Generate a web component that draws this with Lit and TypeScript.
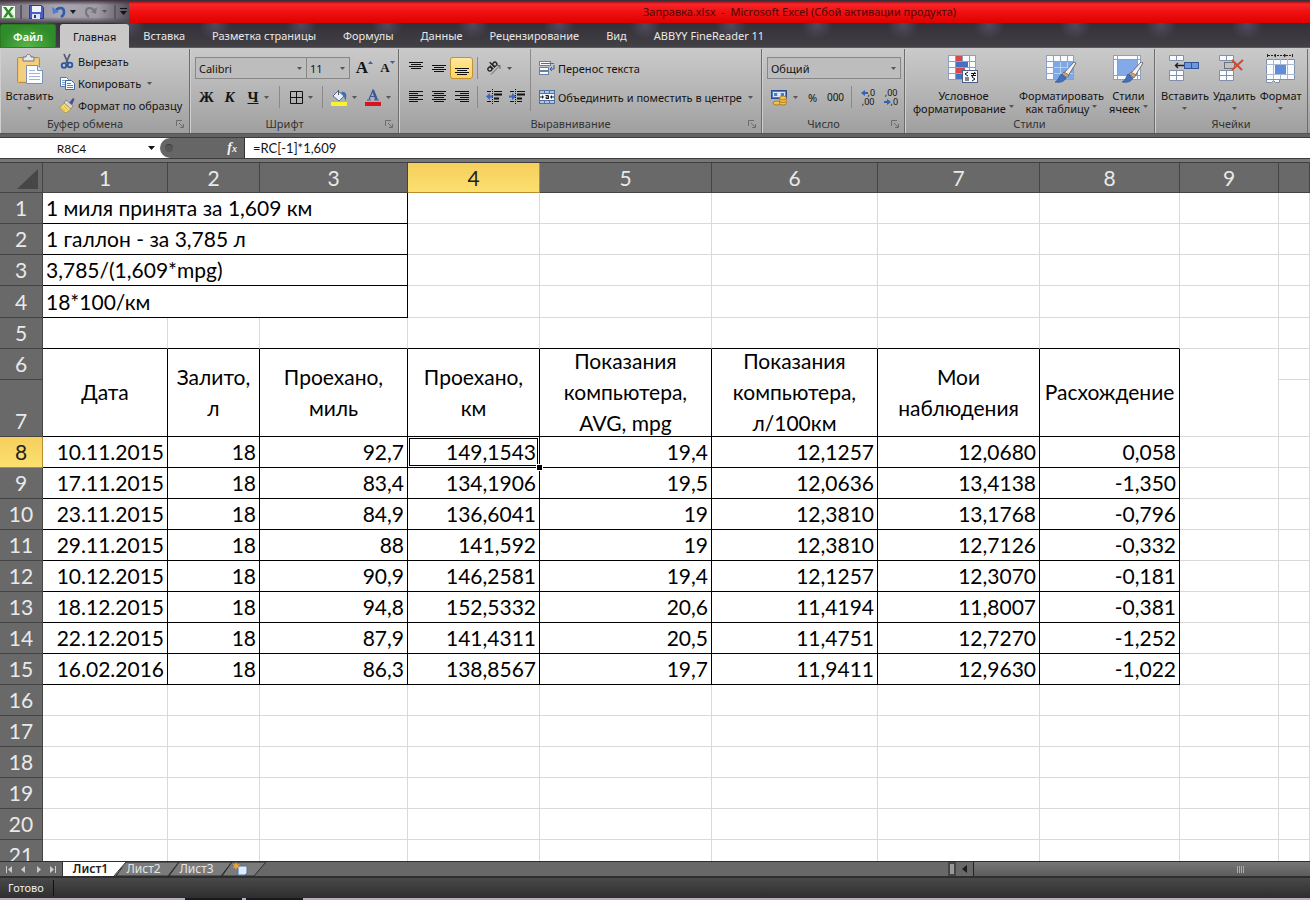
import { LitElement, html, svg, css, nothing } from "lit";
import { customElement, state } from "lit/decorators.js";
import { classMap } from "lit/directives/class-map.js";

const icon = (w: number, h: number, body: unknown) =>
  html`<svg width=${w} height=${h} viewBox="0 0 ${w} ${h}" aria-hidden="true">${body}</svg>`;

const caret = icon(5, 3, svg`<path d="M0 0h5L2.500 3z" fill="#555"/>`);

/* Horizontal strokes of the alignment buttons: [x, y, width] */
const strokes = (rows: number[][]) =>
  icon(16, 16, svg`${rows.map(([x, y, w]) => svg`<rect x=${x} y=${y} width=${w} height="1" fill="#111"/>`)}`);

const alignTop = strokes([[1, 2, 14], [3, 4, 10], [1, 6, 14], [3, 8, 10]]);
const alignMiddle = strokes([[1, 5, 14], [3, 7, 10], [1, 9, 14], [3, 11, 10]]);
const alignBottom = strokes([[1, 8, 14], [3, 10, 10], [1, 12, 14], [3, 14, 10]]);
const alignLeft = strokes([[1, 2, 14], [1, 4, 9], [1, 6, 14], [1, 8, 9], [1, 10, 14], [1, 12, 9]]);
const alignCenter = strokes([[1, 2, 14], [3, 4, 10], [1, 6, 14], [3, 8, 10], [1, 10, 14], [3, 12, 10]]);
const alignRight = strokes([[1, 2, 14], [6, 4, 9], [1, 6, 14], [6, 8, 9], [1, 10, 14], [6, 12, 9]]);

const indent = (out: boolean) =>
  icon(16, 16, svg`
    <path d="M1 2.500h4M8 2.500h8M1 12.500h4M8 12.500h5" stroke="#111"/>
    <path d="M8 5.500h8M8 9.500h5" stroke="#111" stroke-width="2"/>
    <path d="M6.500 0v16" stroke="#111" stroke-dasharray="1 1"/>
    <path d=${out ? "M0 7.500l4-3.500v2.500h3v2h-3v2.500z" : "M7 7.500L3 4v2.500H0v2h3v2.500z"} fill="#3a66c4"/>`);

const excel = icon(16, 16, svg`
  <rect x=".5" y="1.500" width="14" height="13" fill="#f3faf1" stroke="#5c9a55"/>
  <path d="M2 3h3l2.500 3.500L10 3h3L9 8l4 5.500h-3.500L7.200 10 5 13.500H2L5.700 8z" fill="#2e8b2b"/>
  <path d="M10 8l3 4" stroke="#bfe3ad"/>`);
const save = icon(15, 15, svg`
  <path d="M.5 1.500h12l2 2v11h-14z" fill="#4a5fc0" stroke="#2c3b85"/>
  <rect x="3" y="2" width="9" height="6" fill="#eef2fb"/>
  <rect x="3" y="10" width="8" height="5" fill="#dfe4f2"/><rect x="5" y="11" width="2" height="3" fill="#2c3b85"/>`);
const undo = icon(14, 14, svg`
  <path d="M4 5c3-3 8-3 8 2 0 2-1 4-3 5" fill="none" stroke="#2d5cae" stroke-width="2.500"/>
  <path d="M0 2l1 7 6-2z" fill="#4a7fd0"/>`);
const redo = icon(14, 14, svg`
  <path d="M10 5c-3-3-8-3-8 2 0 2 1 4 3 5" fill="none" stroke="#77757d" stroke-width="2"/>
  <path d="M13 2l-1 7-5-2z" fill="#77757d"/>`);

const paste = icon(28, 30, svg`
  <rect x="1.500" y="3.500" width="22" height="25" rx="1" fill="#f0c368" stroke="#c08c36"/>
  <rect x="3" y="5" width="19" height="22" fill="#f5cf80"/>
  <path d="M7 3h3c0-3.500 5-3.500 5 0h3v4H7z" fill="#e8e8e8" stroke="#777"/>
  <path d="M10.500 11.500h11l5 5v13h-16z" fill="#fcfdff" stroke="#7d8fb5"/>
  <path d="M21.500 11.500v5h5" fill="#dde6f5" stroke="#7d8fb5"/>
  <path d="M13 16.500h6M13 19.500h11M13 22.500h11M13 25.500h11" stroke="#a3b4d4"/>`);
const cut = icon(16, 16, svg`
  <path d="M5 1l4 9M11 1L7 10" stroke="#555e70" stroke-width="1.800"/>
  <circle cx="5" cy="12.500" r="2.300" fill="none" stroke="#2a56a8" stroke-width="1.800"/>
  <circle cx="11" cy="12" r="2.300" fill="none" stroke="#2a56a8" stroke-width="1.800"/>`);
const copy = icon(16, 16, svg`
  <path d="M1.500 2.500h6l2 2v7h-8z" fill="#f7faff" stroke="#5577ad"/>
  <path d="M3 5.500h4M3 7.500h5M3 9.500h4" stroke="#7f9ccb"/>
  <path d="M6.500 5.500h6l3 3v6h-9z" fill="#f7faff" stroke="#3f66a8"/>
  <path d="M8 8.500h4M8 10.500h6M8 12.500h6" stroke="#5f83bd"/>`);
const brush = icon(16, 16, svg`
  <path d="M10 6l4-5 1.500 1L13 8z" fill="#55498a"/>
  <path d="M7 3l7 6-2 3-7-6z" fill="#d4d7de" stroke="#666" stroke-width=".6"/>
  <path d="M5 6l7 6c-3 2-4 4-6 3.500C4 14 2 11 0 10.500 2 10 4 8 5 6z" fill="#f5dc6e" stroke="#a98420" stroke-width=".6"/>
  <path d="M3 10.500l3 3M5 9l3.500 3.500" stroke="#c59b2a" stroke-width=".7"/>`);

const borders = icon(13, 13, svg`<path d="M.5 .5h12v12H.5zM6.500 .5v12M.5 6.500h12" fill="none" stroke="#111"/>`);
const fill = icon(16, 17, svg`
  <path d="M2 7l5-5 6 5-5 5z" fill="#e9f0fa" stroke="#4d6c9c"/>
  <path d="M7.500 6V1" stroke="#555"/><path d="M10 3c6-1 6 4 4.500 9-1-2-1-5-2.500-6z" fill="#3d6bb5"/>
  <rect y="13" width="16" height="4" fill="#f8f32b"/>`);
const fontColor = icon(16, 17, svg`
  <path d="M4 10.500L8 1l4 9.500" fill="none" stroke="#3a5a9c" stroke-width="1.200"/>
  <path d="M8 1.500l3.500 9" stroke="#3a5a9c" stroke-width="2.500"/>
  <path d="M5.500 7.500h5M2 11h4M9 11h5" stroke="#3a5a9c"/>
  <rect y="13" width="16" height="4" fill="#d8141a"/>`);
const markUp = icon(5, 3, svg`<path d="M0 3L2.500 0 5 3z" fill="#3c5fae"/>`);
const markDown = icon(5, 3, svg`<path d="M0 0h5L2.500 3z" fill="#3c5fae"/>`);

const slant = icon(16, 16, svg`
  <g transform="rotate(-45 6 7)" fill="none" stroke="#222" stroke-width="1.300">
    <circle cx="3" cy="7" r="2"/><path d="M5.500 4.500V9.500"/>
    <circle cx="10" cy="7" r="2"/><path d="M7.700 2v7.500"/>
  </g>
  <path d="M5 14.500l9-9M10.500 5.500H14V9" fill="none" stroke="#666"/>`);
const wrap = icon(16, 16, svg`
  <rect x=".5" y="1.500" width="11" height="4" fill="#fafcff" stroke="#6b7f9f"/>
  <path d="M2 3.500h13" stroke="#8d5a44"/>
  <rect x=".5" y="7.500" width="9" height="3" fill="#fafcff" stroke="#6b7f9f"/>
  <rect x=".5" y="11.500" width="9" height="3" fill="#fafcff" stroke="#6b7f9f"/>
  <path d="M15 5v4h-4M13 7l-2 2 2 2" fill="none" stroke="#2e5cb0"/>`);
const merge = icon(16, 16, svg`
  <rect x=".5" y="1.500" width="15" height="13" fill="#f4f8ff" stroke="#52719f"/>
  <path d="M1 2h14v2H1zM1 12h14v2H1z" fill="#a9c6ef"/>
  <path d="M5.500 1v3M10.500 1v3M5.500 12v3M10.500 12v3M0 4.500h16M0 11.500h16" stroke="#52719f"/>
  <path d="M1 8h4M11 8h4M3.500 6.500V9.500M12.500 6.500V9.500" fill="none" stroke="#222"/>
  <path d="M6.500 6.500h3v3.500M9 8H7v1.500h2" fill="none" stroke="#222"/>`);
const money = icon(17, 17, svg`
  <rect x=".5" y="1.500" width="15" height="8" fill="#4d7cc7" stroke="#294d90"/>
  <rect x="2.500" y="3.500" width="11" height="4" fill="none" stroke="#dbe8fb"/><circle cx="8" cy="5.500" r="2" fill="#dbe8fb"/>
  <g fill="#f3c24a" stroke="#93651a" stroke-width=".7">
    <ellipse cx="6" cy="14" rx="4" ry="2"/><ellipse cx="12" cy="14" rx="3.500" ry="2"/><ellipse cx="12" cy="11.500" rx="3.500" ry="2"/><ellipse cx="12" cy="9" rx="3.500" ry="2"/>
  </g>`);
const arrowL = icon(7, 6, svg`<path d="M0 3l4-3v2h3v2H4v2z" fill="#2f61bd"/>`);
const arrowR = icon(7, 6, svg`<path d="M7 3L3 0v2H0v2h3v2z" fill="#2f61bd"/>`);

const gridBase = svg`
  <rect x=".5" y="1.500" width="27" height="24" fill="#f9fbff" stroke="#8ea0be"/>
  <path d="M7.500 1v25M14.500 1v25M21.500 1v25M0 7.500h28M0 13.500h28M0 19.500h28" stroke="#8ea0be"/>`;
const paintBrush = svg`
  <path d="M28 8l2 1-8 13-4-3z" fill="#f2f2f2" stroke="#555" stroke-width=".8"/>
  <path d="M18 18l5 3-2 3-5-4z" fill="#c9a27c" stroke="#705038" stroke-width=".6"/>
  <path d="M15 20l5 4c-2 4-6 5-11 4 3-1 4-5 6-8z" fill="#3f73bf" stroke="#274a86" stroke-width=".6"/>`;
const conditional = icon(31, 30, svg`${gridBase}
  <rect x="8" y="2" width="6" height="5" fill="#d84848"/><rect x="8" y="8" width="12" height="5" fill="#4572c0"/>
  <rect x="8" y="14" width="9" height="5" fill="#d84848"/><rect x="8" y="20" width="6" height="5" fill="#4572c0"/>
  <rect x="14.500" y="16.500" width="15" height="12" fill="#f7faff" stroke="#4c5f86"/>
  <path d="M20 18l-3 2 3 2M17 24h4M17 26h4M23 19.500h5M23 21.500h5M27 18l-3 5M24 23l3 2-3 2" fill="none" stroke="#111"/>`);
const formatTable = icon(31, 30, svg`${gridBase}
  <path d="M8 8h19v17H8z" fill="#7fa8e6"/><path d="M14.500 8v17M21.500 8v17M8 13.500h19M8 19.500h19" stroke="#b8cff2"/>${paintBrush}`);
const cellStyles = icon(31, 30, svg`
  <rect x=".5" y="1.500" width="27" height="24" fill="#f9fbff" stroke="#8ea0be"/>
  <path d="M4.500 1v25M24.500 1v25M0 5.500h28M0 21.500h28" stroke="#8ea0be"/>
  <rect x="5" y="6" width="19" height="15" fill="#82a9e8"/>${paintBrush}`);
const smallGrid = svg`<g fill="#f9fbff" stroke="#8190ab">
  <path d="M.5 1.500h14v5H.5zM7.500 1.500v5M.5 16.500h14v10H.5zM7.500 16.500v10M.5 21.500h14"/></g>`;
const insertCells = icon(31, 30, svg`${smallGrid}
  <path d="M6 11.500h9M9 9L6.500 11.500 9 14" fill="none" stroke="#222" stroke-width="1.400"/>
  <rect x="15.500" y="8.500" width="14" height="6" fill="#6c98df" stroke="#34558f"/><path d="M22.500 8v7" stroke="#34558f"/>`);
const deleteCells = icon(31, 30, svg`${smallGrid}
  <rect x="5.500" y="8.500" width="10" height="6" fill="none" stroke="#222" stroke-dasharray="1 1"/>
  <path d="M13 6l10 10M24 6L13 16" stroke="#d9452f" stroke-width="2"/>`);
const formatCells = icon(32, 30, svg`
  <path d="M3 1.500h24" stroke="#222" stroke-dasharray="2 1"/><path d="M2.500 0v3M27.500 0v3M11 0L9 1.500 11 3M19 0l2 1.500L19 3" stroke="#222" fill="none"/>
  <path d="M1.500 5.500h28v20h-28zM1.500 25.500v3h5l2-2 2 2h4v-3" fill="#f9fbff" stroke="#8190ab"/>
  <path d="M8.500 5v20M22.500 5v20M1 10.500h29M1 20.500h29M15.500 5v5M15.500 21v4" stroke="#aab8d0"/>
  <rect x="10" y="11" width="11" height="9" fill="#5f8ddc"/>`);
const launcher = icon(8, 8, svg`<path d="M.5 6V.5H6M4 7.500h3.500V4M3 3l4 4" fill="none" stroke="#6d6d6d"/>`);
const newSheet = icon(16, 14, svg`
  <path d="M5 4h9v7l-2 2H5z" fill="#dfeafb" stroke="#53719f"/>
  <path d="M3 0l1 2.500 3-.5-2 2 2 2-3-.500L3 8 2 5.500-.500 6l2-2-2-2 2.500.500z" fill="#f0a531"/>`);

interface Column { width: string; title: string }
const columns: Column[] = [
  { width: "c125", title: "Дата" },
  { width: "c92", title: "Залито,\nл" },
  { width: "c148", title: "Проехано,\nмиль" },
  { width: "c132", title: "Проехано,\nкм" },
  { width: "c172", title: "Показания\nкомпьютера,\nAVG, mpg" },
  { width: "c166", title: "Показания\nкомпьютера,\nл/100км" },
  { width: "c162", title: "Мои\nнаблюдения" },
  { width: "c140", title: "Расхождение" },
];
const notes = ["1 миля принята за 1,609 км", "1 галлон - за 3,785 л", "3,785/(1,609*mpg)", "18*100/км"];
const data = [
  ["10.11.2015", "18", "92,7", "149,1543", "19,4", "12,1257", "12,0680", "0,058"],
  ["17.11.2015", "18", "83,4", "134,1906", "19,5", "12,0636", "13,4138", "-1,350"],
  ["23.11.2015", "18", "84,9", "136,6041", "19", "12,3810", "13,1768", "-0,796"],
  ["29.11.2015", "18", "88", "141,592", "19", "12,3810", "12,7126", "-0,332"],
  ["10.12.2015", "18", "90,9", "146,2581", "19,4", "12,1257", "12,3070", "-0,181"],
  ["18.12.2015", "18", "94,8", "152,5332", "20,6", "11,4194", "11,8007", "-0,381"],
  ["22.12.2015", "18", "87,9", "141,4311", "20,5", "11,4751", "12,7270", "-1,252"],
  ["16.02.2016", "18", "86,3", "138,8567", "19,7", "11,9411", "12,9630", "-1,022"],
];

const reset = css`
  * { box-sizing: border-box; }
  svg { display: block; flex: none; }
  button, input, select { font: inherit; color: inherit; margin: 0; padding: 0; border: 0; background: none; border-radius: 0; outline: none; }
`;

@customElement("excel-ribbon")
export class ExcelRibbon extends LitElement {
  static styles = [reset, css`
    :host { display: flex; height: 86px; padding-top: 1px; color: #141414; background: linear-gradient(#cacaca, #b8b8b8 45%, #9f9f9f); border-bottom: 1px solid #555; overflow: hidden; }
    .group { display: flex; flex-direction: column; flex: none; border-right: 1px solid #6d6d6d; box-shadow: inset 1px 0 #cfcfcf; }
    .w190 { width: 190px; } .w209 { width: 209px; } .w363 { width: 363px; } .w143 { width: 143px; } .w250 { width: 250px; } .w153 { width: 153px; }
    .body { flex: 1; display: flex; min-height: 0; }
    .caption { display: flex; align-items: center; gap: 6px; height: 17px; padding-bottom: 2px; color: #333; }
    .caption span { flex: 1; text-align: center; }
    .caption svg { margin-right: 5px; }
    .big { display: flex; flex-direction: column; align-items: center; text-align: center; line-height: 13px; padding-top: 5px; white-space: nowrap; }
    .big svg:first-child { margin-bottom: 5px; }
    .big .tail { margin-top: 5px; }
    .big .line { display: flex; align-items: center; gap: 3px; }
    .clip { width: 59px; }
    .stack { display: flex; flex-direction: column; padding-top: 1px; }
    .stack button, .row button { display: flex; align-items: center; }
    .stack button { height: 22px; gap: 3px; white-space: nowrap; }
    .stack .drop { margin-left: 3px; }
    .rows { display: flex; flex-direction: column; padding: 6px 5px 0; gap: 3px; flex: 1; min-width: 0; }
    .rows.narrow { flex: none; padding-right: 2px; border-right: 1px solid #8b8b8b; margin: 0 0 5px; }
    .rows.narrow + .rows { padding-left: 8px; }
    .row { display: flex; align-items: center; height: 26px; white-space: nowrap; }
    .combo + .combo { margin-left: -1px; }
    .sep { width: 1px; height: 22px; margin: 0 4px; background: #8a8a8a; flex: none; }
    .combo { display: grid; align-items: center; height: 22px; border: 1px solid #878787; background: #bdbdbd; flex: none; }
    .combo select { grid-area: 1 / 1; appearance: none; width: 100%; height: 20px; padding-left: 3px; }
    .combo svg { grid-area: 1 / 1; justify-self: end; margin-right: 4px; pointer-events: none; }
    .w112 { width: 112px; } .w44 { width: 44px; } .w134 { width: 134px; }
    .tool { width: 23px; height: 22px; justify-content: center; flex: none; }
    .tool.wide { width: 34px; gap: 5px; }
    .row .on { background: linear-gradient(#ffe89a, #ffd45c); border: 1px solid #c29232; border-radius: 3px; }
    .serif { font-family: "Liberation Serif", serif; font-weight: 700; font-size: 15px; }
    .large { font-size: 17px; margin-left: 3px; }
    .small { font-size: 13px; }
    .grow svg { align-self: flex-start; margin-top: 4px; }
    .italic { font-style: italic; }
    .under { text-decoration: underline; }
    .text { gap: 3px; }
    .text .drop { margin-left: 3px; }
    .zeros { font-size: 10px; }
    .row .digits { display: grid; grid-template-columns: 7px 7px; grid-template-rows: 9px 9px; place-content: center; align-items: center; line-height: 9px; font-size: 9px; }
    .digits .full { grid-column: 1 / -1; text-align: right; }
    .styles { padding-left: 8px; gap: 5px; }
    .cells { padding-left: 6px; gap: 4px; }
  `];

  private big(img: unknown, lines: string[], cls = "") {
    return html`<button class="big ${cls}">${img}
      ${lines.length === 1
        ? html`<span>${lines[0]}</span><span class="tail">${caret}</span>`
        : html`<span>${lines[0]}</span><span class="line">${lines[1]} ${caret}</span>`}
    </button>`;
  }
  private caption(text: string, launch = true) {
    return html`<div class="caption"><span>${text}</span>${launch ? launcher : nothing}</div>`;
  }

  render() {
    return html`
      <section class="group w190">
        <div class="body">
          ${this.big(paste, ["Вставить"], "clip")}
          <div class="stack">
            <button>${cut}<span>Вырезать</span></button>
            <button>${copy}<span>Копировать</span><span class="drop">${caret}</span></button>
            <button>${brush}<span>Формат по образцу</span></button>
          </div>
        </div>
        ${this.caption("Буфер обмена")}
      </section>
      <section class="group w209">
        <div class="body"><div class="rows">
          <div class="row">
            <label class="combo w112"><select aria-label="Шрифт"><option>Calibri</option></select>${caret}</label>
            <label class="combo w44"><select aria-label="Размер шрифта"><option>11</option></select>${caret}</label>
            <button class="tool serif large grow" aria-label="Увеличить размер">A${markUp}</button>
            <button class="tool serif small grow" aria-label="Уменьшить размер">A${markDown}</button>
          </div>
          <div class="row">
            <button class="tool serif">Ж</button>
            <button class="tool serif italic">К</button>
            <button class="tool serif wide"><span class="under">Ч</span>${caret}</button>
            <span class="sep"></span>
            <button class="tool wide" aria-label="Границы">${borders}${caret}</button>
            <span class="sep"></span>
            <button class="tool wide" aria-label="Заливка">${fill}${caret}</button>
            <button class="tool wide" aria-label="Цвет текста">${fontColor}${caret}</button>
          </div>
        </div></div>
        ${this.caption("Шрифт")}
      </section>
      <section class="group w363">
        <div class="body">
          <div class="rows narrow">
            <div class="row">
              <button class="tool" aria-label="По верхнему краю">${alignTop}</button>
              <button class="tool" aria-label="По середине">${alignMiddle}</button>
              <button class="tool on" aria-label="По нижнему краю">${alignBottom}</button>
              <span class="sep"></span>
              <button class="tool wide" aria-label="Ориентация">${slant}${caret}</button>
            </div>
            <div class="row">
              <button class="tool" aria-label="По левому краю">${alignLeft}</button>
              <button class="tool" aria-label="По центру">${alignCenter}</button>
              <button class="tool" aria-label="По правому краю">${alignRight}</button>
              <span class="sep"></span>
              <button class="tool" aria-label="Уменьшить отступ">${indent(true)}</button>
              <button class="tool" aria-label="Увеличить отступ">${indent(false)}</button>
            </div>
          </div>
          <div class="rows">
            <div class="row"><button class="text">${wrap}<span>Перенос текста</span></button></div>
            <div class="row"><button class="text">${merge}<span>Объединить и поместить в центре</span><span class="drop">${caret}</span></button></div>
          </div>
        </div>
        ${this.caption("Выравнивание")}
      </section>
      <section class="group w143">
        <div class="body"><div class="rows">
          <div class="row"><label class="combo w134"><select aria-label="Числовой формат"><option>Общий</option></select>${caret}</label></div>
          <div class="row">
            <button class="tool wide" aria-label="Денежный формат">${money}${caret}</button>
            <button class="tool">%</button>
            <button class="tool zeros">000</button>
            <span class="sep"></span>
            <button class="tool digits" aria-label="Увеличить разрядность">${arrowL}<span>,0</span><span class="full">,00</span></button>
            <button class="tool digits" aria-label="Уменьшить разрядность"><span class="full">,00</span>${arrowR}<span>,0</span></button>
          </div>
        </div></div>
        ${this.caption("Число")}
      </section>
      <section class="group w250">
        <div class="body styles">
          ${this.big(conditional, ["Условное", "форматирование"])}
          ${this.big(formatTable, ["Форматировать", "как таблицу"])}
          ${this.big(cellStyles, ["Стили", "ячеек"])}
        </div>
        ${this.caption("Стили", false)}
      </section>
      <section class="group w153">
        <div class="body cells">
          ${this.big(insertCells, ["Вставить"])}
          ${this.big(deleteCells, ["Удалить"])}
          ${this.big(formatCells, ["Формат"])}
        </div>
        ${this.caption("Ячейки", false)}
      </section>`;
  }
}

@customElement("excel-grid")
export class ExcelGrid extends LitElement {
  static styles = [reset, css`
    :host { display: block; overflow: hidden; background: #fff; font-family: Lato, "Noto Sans", sans-serif; font-size: 21px; color: #000; }
    table { width: 100%; table-layout: fixed; border-collapse: separate; border-spacing: 0; }
    .c43 { width: 43px; } .c125 { width: 125px; } .c92 { width: 92px; } .c148 { width: 148px; } .c132 { width: 132px; }
    .c172 { width: 172px; } .c166 { width: 166px; } .c162 { width: 162px; } .c140 { width: 140px; } .c99 { width: 99px; }
    th, td { padding: 0 3px; border-right: 1px solid #d9d9d9; border-bottom: 1px solid #d9d9d9; font-weight: 400; line-height: 30px; white-space: nowrap; }
    tr { height: 31px; }
    .r30 { height: 30px; } .r32 { height: 32px; } .r57 { height: 57px; }
    th { background: #696969; color: #e9e9e9; border-color: #444; text-align: center; vertical-align: bottom; }
    thead th { line-height: 29px; }
    th.on { background: linear-gradient(#f6cf5c, #fbe070); color: #222; border-color: #b98b2c; }
    .corner svg { margin: 0 0 3px auto; }
    td.box { border-color: #000; }
    td.under { border-bottom-color: #000; }
    td.num { text-align: right; }
    td.title { text-align: center; padding: 0; vertical-align: top; }
    .merged { display: flex; align-items: center; justify-content: center; height: 85px; line-height: 31px; white-space: pre-line; }
    td.active { position: relative; box-shadow: inset 0 0 0 1px #fff, inset 0 0 0 2px #000; }
    .handle { position: absolute; right: -4px; bottom: -4px; width: 7px; height: 7px; background: #000; border: 1px solid #fff; z-index: 1; }
  `];

  private rowHead(n: number) {
    return html`<th scope="row" class=${classMap({ on: n === 8 })}>${n}</th>`;
  }
  private empty(n: number, cls = "") {
    return Array.from({ length: n }, () => html`<td class=${cls}></td>`);
  }

  render() {
    return html`<table>
      <colgroup><col class="c43">${columns.map(c => html`<col class=${c.width}>`)}<col class="c99"><col></colgroup>
      <thead><tr class="r30">
        <th class="corner">${icon(22, 20, svg`<path d="M21 0v20H0z" fill="#474747"/>`)}</th>
        ${[1, 2, 3, 4, 5, 6, 7, 8, 9].map(n => html`<th scope="col" class=${classMap({ on: n === 4 })}>${n}</th>`)}<th></th>
      </tr></thead>
      <tbody>
        ${notes.map((t, i) => html`<tr class=${i === 3 ? "r32" : ""}>${this.rowHead(i + 1)}<td class="box" colspan="3">${t}</td>${this.empty(7)}</tr>`)}
        <tr>${this.rowHead(5)}${this.empty(8, "under")}${this.empty(2)}</tr>
        <tr>${this.rowHead(6)}${columns.map(c => html`<td class="box title" rowspan="2"><div class="merged">${c.title}</div></td>`)}<td rowspan="2"></td><td></td></tr>
        <tr class="r57">${this.rowHead(7)}<td></td></tr>
        ${data.map((r, i) => html`<tr>${this.rowHead(i + 8)}${r.map((v, j) => {
          const active = i === 0 && j === 3;
          return html`<td class=${classMap({ box: true, num: true, active })}>${v}${active ? html`<span class="handle"></span>` : nothing}</td>`;
        })}${this.empty(2)}</tr>`)}
        ${[16, 17, 18, 19, 20, 21].map(n => html`<tr>${this.rowHead(n)}${this.empty(10)}</tr>`)}
      </tbody>
    </table>`;
  }
}

@customElement("app-root")
export class AppRoot extends LitElement {
  @state() private tab = "Главная";

  static styles = [reset, css`
    :host { display: flex; flex-direction: column; height: 100vh; overflow: hidden; background: #636363; color: #141414; font-family: "Noto Sans", "Open Sans", sans-serif; font-size: 11px; }
    .titlebar { display: flex; height: 23px; flex: none; background: #39303c; }
    .quick { display: flex; align-items: center; width: 129px; flex: none; padding-left: 1px; background: linear-gradient(#3b2e3a, transparent 5px, transparent 17px, #4b454e), linear-gradient(90deg, #777079, #aaa6b2 45%, #a09ca6 75%, #57505a); }
    .quick button { display: flex; align-items: center; justify-content: center; }
    .bar { width: 2px; height: 14px; border: solid #5b5660; border-width: 0 1px; margin: 0 7px 0 3px; }
    .quick .undo { margin-left: 8px; gap: 4px; }
    .quick .redo { margin: 0 7px 0 8px; gap: 4px; }
    .quick .bar.last { margin: 0 4px 0 0; }
    .title { flex: 1; margin: 1px 0 0; padding-left: 160px; font-size: 11px; font-weight: 400; line-height: 22px; text-align: center; white-space: pre; color: #4c0808; background: linear-gradient(#8f0a10, #f8262a 3px, #f21212 10px, #df0000); }
    .tabs { display: flex; gap: 1px; flex: none; height: 25px; padding-top: 1px; color: #e8e8e8; border-bottom: 1px solid #5d5d5d;
      background: radial-gradient(ellipse 16px 14px at 50% 2px, rgba(120, 112, 150, .4), transparent) 0 0 / 86px 16px repeat-x, linear-gradient(#332f38, #424145); }
    .tabs button { height: 23px; padding: 0 13px; line-height: 23px; white-space: nowrap; }
    .tabs .file { width: 56px; padding: 0; color: #fff; font-weight: 600; border: 1px solid #2b7a22; border-bottom: 0; border-radius: 3px 3px 0 0; background: radial-gradient(ellipse at 50% 100%, #58b548, #2f8c2a 70%); margin-right: 3px; }
    .tabs .current { color: #111; background: #c9c9c9; border-radius: 3px 3px 0 0; height: 24px; }
    excel-ribbon { flex: none; }
    .formula { display: flex; flex: none; height: 22px; margin-top: 3px; border: solid #3c3c3c; border-width: 1px 0; background: #fff; font-family: Lato, "Noto Sans", sans-serif; font-size: 13px; }
    .name { display: flex; align-items: center; width: 160px; padding-right: 5px; }
    .name input { width: 143px; text-align: center; font-size: 12px; }
    .name svg { margin-left: auto; }
    .pill { display: flex; align-items: center; width: 85px; padding: 0 7px 0 5px; background: #666; border-radius: 10px 0 0 10px; border-right: 1px solid #333; color: #f4f4f4; }
    .dot { width: 8px; height: 8px; border-radius: 50%; background: #565656; border-top: 1px solid #3e3e3e; margin-right: auto; }
    .fx { font: italic 700 14px "Liberation Serif", serif; }
    .fx small { font-size: 10px; }
    .formula .expr { flex: 1; padding-left: 8px; min-width: 0; }
    .rule { height: 4px; flex: none; background: #777; border-bottom: 1px solid #3f3f3f; }
    excel-grid { flex: 1; min-height: 0; }
    .sheets { display: flex; flex: none; height: 17px; background: #686868; border: solid #2e2e2e; border-width: 1px 0 2px; font-size: 12px; }
    .nav { display: flex; align-items: center; justify-content: space-between; width: 63px; padding: 0 6px; border-right: 1px solid #333; }
    .nav button { display: flex; }
    .sheet { display: grid; width: 63px; height: 14px; margin-right: -10px; color: #e4e4e4; line-height: 14px; align-items: center; }
    .sheet > * { grid-area: 1 / 1; }
    .sheet span { text-align: center; padding-right: 8px; }
    .sheet.open { color: #222; font-weight: 600; z-index: 1; }
    .sheet.add { width: 44px; justify-items: center; }
    .sheet.add svg:last-child { margin-right: 6px; }
    .scroll { display: flex; margin-left: auto; width: 362px; }
    .split { width: 8px; background: #999; border: 2px solid #444; }
    .scroll button { display: flex; align-items: center; justify-content: center; width: 18px; border-right: 1px solid #222; }
    .thumb { flex: 1; display: flex; align-items: center; justify-content: flex-end; padding-right: 65px; background: linear-gradient(#767676, #5c5c5c); }
    .status { display: flex; flex: none; align-items: center; height: 20px; color: #ececec; background: linear-gradient(#494949, #2e2e2e); }
    .status span { padding: 0 9px 0 8px; border-right: 1px solid #111; line-height: 16px; }
    .desk { height: 2px; flex: none; background: linear-gradient(90deg, #b9adc2 185px, #1c1820 185px, #1c1820 242px, #b9adc2 242px, #b9adc2 246px, #1c1820 246px, #1c1820 303px, #b9adc2 303px); }
  `];

  private sheet(name: string, open = false) {
    return html`<button class="sheet ${open ? "open" : ""}">
      ${icon(63, 14, svg`<path d=${open ? "M0 0H63L51 14H0z" : "M0 14L10 0H63L52 14z"} fill=${open ? "#fff" : "#7b7b7b"} stroke=${open ? "#fff" : "#2c2c2c"}/>
        ${open ? svg`<path d="M63 0L51 14" stroke="#2c2c2c"/>` : nothing}`)}
      <span>${name}</span></button>`;
  }

  render() {
    const tabs = ["Главная", "Вставка", "Разметка страницы", "Формулы", "Данные", "Рецензирование", "Вид", "ABBYY FineReader 11"];
    const darkCaret = icon(6, 4, svg`<path d="M0 0h6L3 4z" fill="#1c1c1c"/>`);
    return html`
      <header class="titlebar">
        <div class="quick">
          ${excel}<span class="bar"></span>
          <button aria-label="Сохранить">${save}</button>
          <button class="undo" aria-label="Отменить">${undo}${darkCaret}</button>
          <button class="redo" aria-label="Вернуть">${redo}${caret}</button>
          <span class="bar last"></span>
          <button aria-label="Настройка панели">${icon(7, 8, svg`<path d="M0 .5h7" stroke="#111"/><path d="M0 3h7L3.500 7z" fill="#111"/>`)}</button>
        </div>
        <h1 class="title">Заправка.xlsx  -  Microsoft Excel (Сбой активации продукта)</h1>
      </header>
      <nav class="tabs">
        <button class="file">Файл</button>
        ${tabs.map(t => html`<button class=${classMap({ current: t === this.tab })} @click=${() => (this.tab = t)}>${t}</button>`)}
      </nav>
      <excel-ribbon></excel-ribbon>
      <div class="formula">
        <div class="name"><input aria-label="Поле имени" value="R8C4">${icon(7, 4, svg`<path d="M0 0h7L3.500 4z" fill="#111"/>`)}</div>
        <div class="pill"><span class="dot"></span><span class="fx">f<small>x</small></span></div>
        <input class="expr" aria-label="Строка формул" value="=RC[-1]*1,609">
      </div>
      <div class="rule"></div>
      <excel-grid></excel-grid>
      <div class="sheets">
        <div class="nav">
          <button aria-label="Первый лист">${icon(6, 7, svg`<path d="M.5 0v7" stroke="#ccc"/><path d="M6 0v7L2 3.500z" fill="#ccc"/>`)}</button>
          <button aria-label="Предыдущий лист">${icon(5, 7, svg`<path d="M4 0v7L0 3.500z" fill="#ccc"/>`)}</button>
          <button aria-label="Следующий лист">${icon(5, 7, svg`<path d="M1 0v7l4-3.500z" fill="#ccc"/>`)}</button>
          <button aria-label="Последний лист">${icon(6, 7, svg`<path d="M0 0v7l4-3.500zM5 0v7h1V0z" fill="#ccc"/>`)}</button>
        </div>
        ${this.sheet("Лист1", true)}${this.sheet("Лист2")}${this.sheet("Лист3")}
        <button class="sheet add" aria-label="Вставить лист">${icon(44, 14, svg`<path d="M0 14L10 0H44L32 14z" fill="#7b7b7b" stroke="#2c2c2c"/>`)}${newSheet}</button>
        <div class="scroll">
          <span class="split"></span>
          <button aria-label="Влево">${icon(5, 8, svg`<path d="M5 0v8L0 4z" fill="#1d1d1d"/>`)}</button>
          <span class="thumb">${icon(8, 7, svg`<path d="M.5 0v7M2.500 0v7M4.500 0v7M6.500 0v7" stroke="#aaa"/>`)}</span>
        </div>
      </div>
      <footer class="status"><span>Готово</span></footer>
      <div class="desk"></div>`;
  }
}
